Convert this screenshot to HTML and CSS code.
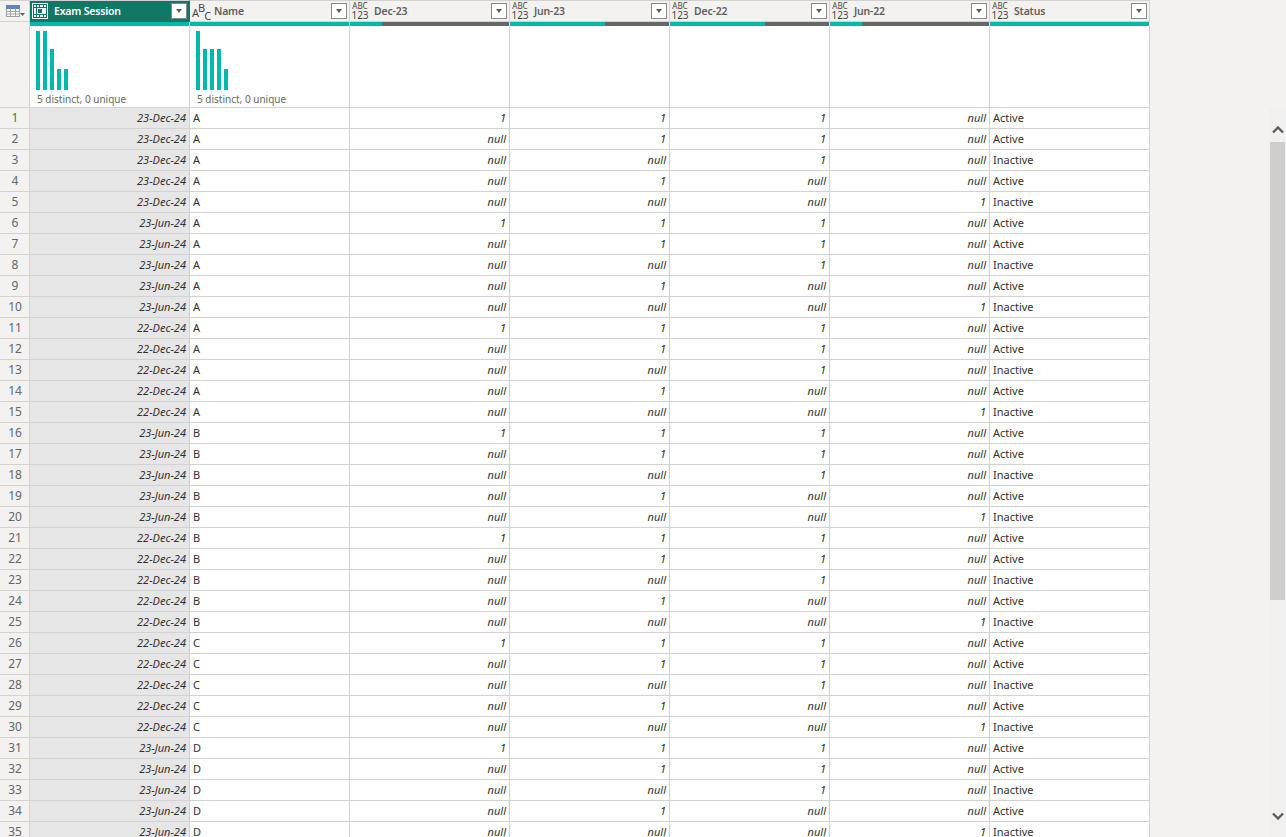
FILE: index.html
```html
<!DOCTYPE html>
<html lang="en">
<head>
<meta charset="utf-8">
<title>Power Query preview</title>
<link rel="stylesheet" href="styles.css">
</head>
<body>
<div class="page">
<main class="table">
  <div class="row head">
    <div class="corner"><svg class="tbl" width="20" height="13" viewBox="0 0 20 13"><rect x="0.500" y="0.500" width="13" height="11" fill="#fff" stroke="#a19f9d"/><rect x="0.500" y="0.500" width="13" height="3" fill="#5b84c4" stroke="#5b84c4"/><path d="M4.500 3.500v8M9.500 3.500v8M0.500 6.500h13M0.500 9h13" stroke="#a19f9d" fill="none"/><path d="M14 8h5l-2.500 3z" fill="#605e5c"/></svg></div>
    <div class="hcell sel"><svg class="dt" width="16" height="16" viewBox="0 0 16 16"><rect width="16" height="16" fill="#fff"/><path d="M1.500 1v14M4.500 1v14M7.500 1v3M11.500 1v3M14.500 1v14M1 1.500h14M1 4.500h14M1 11.500h14M1 14.500h14M7.500 12v3M11.500 12v3" stroke="#117865" fill="none"/><rect x="6" y="6" width="4" height="4" fill="#117865"/></svg><span class="hname">Exam Session</span><span class="btn"><i></i></span></div>
    <div class="hcell"><span class="abc"><b class="a">A</b><b class="b">B</b><b class="c">C</b></span><span class="hname">Name</span><span class="btn"><i></i></span></div>
    <div class="hcell"><span class="any"><b>ABC</b><b>123</b></span><span class="hname">Dec-23</span><span class="btn"><i></i></span></div>
    <div class="hcell"><span class="any"><b>ABC</b><b>123</b></span><span class="hname">Jun-23</span><span class="btn"><i></i></span></div>
    <div class="hcell"><span class="any"><b>ABC</b><b>123</b></span><span class="hname">Dec-22</span><span class="btn"><i></i></span></div>
    <div class="hcell"><span class="any"><b>ABC</b><b>123</b></span><span class="hname">Jun-22</span><span class="btn"><i></i></span></div>
    <div class="hcell"><span class="any"><b>ABC</b><b>123</b></span><span class="hname">Status</span><span class="btn"><i></i></span></div>
  </div>
  <div class="row quality">
    <div class="qnone"></div>
    <div class="q"><i style="width:100%"></i></div>
    <div class="q"><i style="width:100%"></i></div>
    <div class="q"><i style="width:20%"></i></div>
    <div class="q"><i style="width:59.800%"></i></div>
    <div class="q"><i style="width:59.800%"></i></div>
    <div class="q"><i style="width:20%"></i></div>
    <div class="q"><i style="width:100%"></i></div>
  </div>
  <div class="row profile">
    <div class="idx"></div>
    <div class="pcell"><div class="bars"><i style="height:59px"></i><i style="height:59px"></i><i style="height:41px"></i><i style="height:21px"></i><i style="height:21px"></i></div><span class="dist">5 distinct, 0 unique</span></div>
    <div class="pcell"><div class="bars"><i style="height:59px"></i><i style="height:41px"></i><i style="height:41px"></i><i style="height:41px"></i><i style="height:21px"></i></div><span class="dist">5 distinct, 0 unique</span></div>
    <div class="pcell"></div><div class="pcell"></div><div class="pcell"></div><div class="pcell"></div><div class="pcell"></div>
  </div>
  <div class="row"><div class="idx">1</div><div class="date">23-Dec-24</div><div class="t">A</div><div class="n">1</div><div class="n">1</div><div class="n">1</div><div class="n">null</div><div class="t">Active</div></div>
  <div class="row"><div class="idx">2</div><div class="date">23-Dec-24</div><div class="t">A</div><div class="n">null</div><div class="n">1</div><div class="n">1</div><div class="n">null</div><div class="t">Active</div></div>
  <div class="row"><div class="idx">3</div><div class="date">23-Dec-24</div><div class="t">A</div><div class="n">null</div><div class="n">null</div><div class="n">1</div><div class="n">null</div><div class="t">Inactive</div></div>
  <div class="row"><div class="idx">4</div><div class="date">23-Dec-24</div><div class="t">A</div><div class="n">null</div><div class="n">1</div><div class="n">null</div><div class="n">null</div><div class="t">Active</div></div>
  <div class="row"><div class="idx">5</div><div class="date">23-Dec-24</div><div class="t">A</div><div class="n">null</div><div class="n">null</div><div class="n">null</div><div class="n">1</div><div class="t">Inactive</div></div>
  <div class="row"><div class="idx">6</div><div class="date">23-Jun-24</div><div class="t">A</div><div class="n">1</div><div class="n">1</div><div class="n">1</div><div class="n">null</div><div class="t">Active</div></div>
  <div class="row"><div class="idx">7</div><div class="date">23-Jun-24</div><div class="t">A</div><div class="n">null</div><div class="n">1</div><div class="n">1</div><div class="n">null</div><div class="t">Active</div></div>
  <div class="row"><div class="idx">8</div><div class="date">23-Jun-24</div><div class="t">A</div><div class="n">null</div><div class="n">null</div><div class="n">1</div><div class="n">null</div><div class="t">Inactive</div></div>
  <div class="row"><div class="idx">9</div><div class="date">23-Jun-24</div><div class="t">A</div><div class="n">null</div><div class="n">1</div><div class="n">null</div><div class="n">null</div><div class="t">Active</div></div>
  <div class="row"><div class="idx">10</div><div class="date">23-Jun-24</div><div class="t">A</div><div class="n">null</div><div class="n">null</div><div class="n">null</div><div class="n">1</div><div class="t">Inactive</div></div>
  <div class="row"><div class="idx">11</div><div class="date">22-Dec-24</div><div class="t">A</div><div class="n">1</div><div class="n">1</div><div class="n">1</div><div class="n">null</div><div class="t">Active</div></div>
  <div class="row"><div class="idx">12</div><div class="date">22-Dec-24</div><div class="t">A</div><div class="n">null</div><div class="n">1</div><div class="n">1</div><div class="n">null</div><div class="t">Active</div></div>
  <div class="row"><div class="idx">13</div><div class="date">22-Dec-24</div><div class="t">A</div><div class="n">null</div><div class="n">null</div><div class="n">1</div><div class="n">null</div><div class="t">Inactive</div></div>
  <div class="row"><div class="idx">14</div><div class="date">22-Dec-24</div><div class="t">A</div><div class="n">null</div><div class="n">1</div><div class="n">null</div><div class="n">null</div><div class="t">Active</div></div>
  <div class="row"><div class="idx">15</div><div class="date">22-Dec-24</div><div class="t">A</div><div class="n">null</div><div class="n">null</div><div class="n">null</div><div class="n">1</div><div class="t">Inactive</div></div>
  <div class="row"><div class="idx">16</div><div class="date">23-Jun-24</div><div class="t">B</div><div class="n">1</div><div class="n">1</div><div class="n">1</div><div class="n">null</div><div class="t">Active</div></div>
  <div class="row"><div class="idx">17</div><div class="date">23-Jun-24</div><div class="t">B</div><div class="n">null</div><div class="n">1</div><div class="n">1</div><div class="n">null</div><div class="t">Active</div></div>
  <div class="row"><div class="idx">18</div><div class="date">23-Jun-24</div><div class="t">B</div><div class="n">null</div><div class="n">null</div><div class="n">1</div><div class="n">null</div><div class="t">Inactive</div></div>
  <div class="row"><div class="idx">19</div><div class="date">23-Jun-24</div><div class="t">B</div><div class="n">null</div><div class="n">1</div><div class="n">null</div><div class="n">null</div><div class="t">Active</div></div>
  <div class="row"><div class="idx">20</div><div class="date">23-Jun-24</div><div class="t">B</div><div class="n">null</div><div class="n">null</div><div class="n">null</div><div class="n">1</div><div class="t">Inactive</div></div>
  <div class="row"><div class="idx">21</div><div class="date">22-Dec-24</div><div class="t">B</div><div class="n">1</div><div class="n">1</div><div class="n">1</div><div class="n">null</div><div class="t">Active</div></div>
  <div class="row"><div class="idx">22</div><div class="date">22-Dec-24</div><div class="t">B</div><div class="n">null</div><div class="n">1</div><div class="n">1</div><div class="n">null</div><div class="t">Active</div></div>
  <div class="row"><div class="idx">23</div><div class="date">22-Dec-24</div><div class="t">B</div><div class="n">null</div><div class="n">null</div><div class="n">1</div><div class="n">null</div><div class="t">Inactive</div></div>
  <div class="row"><div class="idx">24</div><div class="date">22-Dec-24</div><div class="t">B</div><div class="n">null</div><div class="n">1</div><div class="n">null</div><div class="n">null</div><div class="t">Active</div></div>
  <div class="row"><div class="idx">25</div><div class="date">22-Dec-24</div><div class="t">B</div><div class="n">null</div><div class="n">null</div><div class="n">null</div><div class="n">1</div><div class="t">Inactive</div></div>
  <div class="row"><div class="idx">26</div><div class="date">22-Dec-24</div><div class="t">C</div><div class="n">1</div><div class="n">1</div><div class="n">1</div><div class="n">null</div><div class="t">Active</div></div>
  <div class="row"><div class="idx">27</div><div class="date">22-Dec-24</div><div class="t">C</div><div class="n">null</div><div class="n">1</div><div class="n">1</div><div class="n">null</div><div class="t">Active</div></div>
  <div class="row"><div class="idx">28</div><div class="date">22-Dec-24</div><div class="t">C</div><div class="n">null</div><div class="n">null</div><div class="n">1</div><div class="n">null</div><div class="t">Inactive</div></div>
  <div class="row"><div class="idx">29</div><div class="date">22-Dec-24</div><div class="t">C</div><div class="n">null</div><div class="n">1</div><div class="n">null</div><div class="n">null</div><div class="t">Active</div></div>
  <div class="row"><div class="idx">30</div><div class="date">22-Dec-24</div><div class="t">C</div><div class="n">null</div><div class="n">null</div><div class="n">null</div><div class="n">1</div><div class="t">Inactive</div></div>
  <div class="row"><div class="idx">31</div><div class="date">23-Jun-24</div><div class="t">D</div><div class="n">1</div><div class="n">1</div><div class="n">1</div><div class="n">null</div><div class="t">Active</div></div>
  <div class="row"><div class="idx">32</div><div class="date">23-Jun-24</div><div class="t">D</div><div class="n">null</div><div class="n">1</div><div class="n">1</div><div class="n">null</div><div class="t">Active</div></div>
  <div class="row"><div class="idx">33</div><div class="date">23-Jun-24</div><div class="t">D</div><div class="n">null</div><div class="n">null</div><div class="n">1</div><div class="n">null</div><div class="t">Inactive</div></div>
  <div class="row"><div class="idx">34</div><div class="date">23-Jun-24</div><div class="t">D</div><div class="n">null</div><div class="n">1</div><div class="n">null</div><div class="n">null</div><div class="t">Active</div></div>
  <div class="row"><div class="idx">35</div><div class="date">23-Jun-24</div><div class="t">D</div><div class="n">null</div><div class="n">null</div><div class="n">null</div><div class="n">1</div><div class="t">Inactive</div></div>
</main>
<aside class="scroll">
  <svg class="arrow" width="12" height="8" viewBox="0 0 12 8"><path d="M1 6.500l5-5 5 5" fill="none" stroke="#605e5c" stroke-width="2.400"/></svg>
  <div class="track"><div class="thumb"></div></div>
  <svg class="arrow" width="12" height="8" viewBox="0 0 12 8"><path d="M1 1.500l5 5 5-5" fill="none" stroke="#605e5c" stroke-width="2.400"/></svg>
</aside>
</div>
</body>
</html>
```
FILE: styles.css
```css
* { box-sizing: border-box; }
html, body { margin: 0; height: 100%; overflow: hidden; }
body { background: #f3f2f1; font-family: "Noto Sans", "Open Sans", sans-serif; font-size: 11px; color: #323130; }
.page { display: flex; justify-content: space-between; height: 837px; overflow: hidden; }
.table { width: 1150px; flex: none; background: #fff; }
.row { display: grid; grid-template-columns: 30px repeat(7, 160px); height: 21px; line-height: 20px; }
.row > div { border-right: 1px solid #d2d2d2; border-bottom: 1px solid #d2d2d2; min-width: 0; }
.head { height: 22px; line-height: 20px; }
.head > div { border-top: 1px solid #d2d2d2; background: #f3f2f1; }
.corner { padding: 0 0 0 6px; display: flex; align-items: center; }
.tbl { display: block; }
.hcell { display: flex; align-items: center; padding: 0 2px; font-weight: 600; font-size: 10.500px; letter-spacing: -0.200px; color: #605e5c; }
.hcell.sel { background: #117865; color: #fff; border-right-color: #117865; border-bottom-color: #117865; }
.hname { margin-left: 6px; flex: 1; }
.btn { width: 16px; height: 16px; background: #fff; border: 1px solid #8a8886; display: flex; align-items: center; justify-content: center; }
.btn i { width: 0; height: 0; border-left: 3.500px solid transparent; border-right: 3.500px solid transparent; border-top: 4px solid #605e5c; }
.any { width: 16px; display: flex; flex-direction: column; align-items: center; color: #484644; letter-spacing: 0; }
.any b { font-weight: 400; display: block; line-height: 8px; font-size: 8px; }
.any b + b { font-size: 10px; line-height: 10px; }
.abc { width: 16px; height: 16px; display: flex; justify-content: space-between; color: #484644; font-size: 11px; letter-spacing: 0; line-height: 8px; margin-top: 1px; }
.abc b { font-weight: 400; display: block; margin-right: -1px; }
.abc .a { margin-top: 5px; }
.abc .b { margin-top: 0; }
.abc .c { margin-top: 8px; }
.quality { height: 4px; }
.quality > div { border: 0; }
.qnone { background: #f3f2f1; border-right: 1px solid #d2d2d2 !important; }
.q { background: #666; border-right: 1px solid #e6e6e6 !important; }
.q i { display: block; height: 100%; background: #01b8aa; }
.profile { height: 82px; }
.pcell { display: flex; flex-direction: column; padding: 5px 0 0 6px; }
.bars { display: flex; align-items: flex-end; gap: 3px; height: 59px; }
.bars i { display: block; width: 4px; background: #01b8aa; }
.dist { font-size: 10px; line-height: 13px; margin-top: 3px; margin-left: 1px; color: #666; }
.idx { background: #f3f2f1; text-align: center; color: #666; font-size: 12px; padding-left: 1px; }
.date { background: #e6e6e6; text-align: right; padding-right: 3px; font-style: italic; }
.t { padding-left: 3px; }
.n { text-align: right; padding-right: 3px; font-style: italic; }
.scroll { width: 17px; flex: none; margin-top: 108px; background: #f0f0f0; display: flex; flex-direction: column; align-items: center; }
.arrow { flex: none; margin: 18px 0 5px; }
.arrow:last-child { margin: 7px 0 17px; }
.track { flex: 1; width: 100%; padding: 0 1px; }
.thumb { height: 458px; background: #cdcdcd; margin-top: 3px; }
```
